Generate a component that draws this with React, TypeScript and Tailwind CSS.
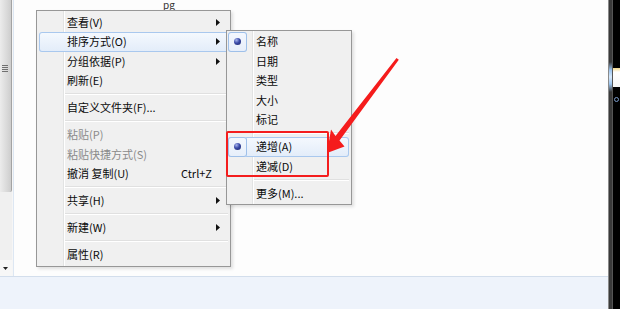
import React from "react";

type MItem = {
  label?: string;
  sep?: boolean;
  arrow?: boolean;
  disabled?: boolean;
  hl?: boolean;
  shortcut?: string;
  checked?: boolean;
};

const mainItems: MItem[] = [
  { label: "查看(V)", arrow: true },
  { label: "排序方式(O)", arrow: true, hl: true },
  { label: "分组依据(P)", arrow: true },
  { label: "刷新(E)" },
  { sep: true },
  { label: "自定义文件夹(F)..." },
  { sep: true },
  { label: "粘贴(P)", disabled: true },
  { label: "粘贴快捷方式(S)", disabled: true },
  { label: "撤消 复制(U)", shortcut: "Ctrl+Z" },
  { sep: true },
  { label: "共享(H)", arrow: true },
  { sep: true },
  { label: "新建(W)", arrow: true },
  { sep: true },
  { label: "属性(R)" },
];

const subItems: MItem[] = [
  { label: "名称", checked: true },
  { label: "日期" },
  { label: "类型" },
  { label: "大小" },
  { label: "标记" },
  { sep: true },
  { label: "递增(A)", checked: true, hl: true },
  { label: "递减(D)" },
  { sep: true },
  { label: "更多(M)..." },
];

const SubArrow = () => (
  <svg width="4" height="7" viewBox="0 0 4 7" className="block">
    <path d="M0 0L4 3.5L0 7Z" fill="#111" />
  </svg>
);

const Sep = ({ ml }: { ml: string }) => (
  <div className={`relative flex h-[7.5px] flex-col justify-center mr-[2px] ${ml}`}>
    <div className="h-px bg-[#e0e0e0]" />
    <div className="h-px bg-white" />
  </div>
);

const hlCls =
  "bg-[linear-gradient(to_bottom,#f5f9fe,#e2ecf9)] shadow-[inset_0_0_0_1px_#a9c8ee]";

function MainMenu() {
  return (
    <div className="absolute left-[36px] top-[10px] w-[195px] border border-[#979797] bg-[#f0f0f0] py-[1.5px] shadow-[2px_2px_3px_rgba(0,0,0,0.12)]">
      <div className="absolute left-[26px] top-0 bottom-0 w-px bg-[#e2e3e3]" />
      <div className="absolute left-[27px] top-0 bottom-0 w-px bg-white" />
      {mainItems.map((it, i) =>
        it.sep ? (
          <Sep key={i} ml="ml-[28px]" />
        ) : (
          <div
            key={i}
            className={`relative flex h-[19.5px] items-center ml-[2px] mr-[1px] pl-[28px] pr-[9px] rounded-[3px] ${
              it.hl ? hlCls : ""
            } ${it.disabled ? "text-[#8a8a8a]" : "text-[#0a0a0a]"}`}
          >
            <span className="flex-1 whitespace-nowrap">{it.label}</span>
            {it.shortcut && <span className="mr-[8px] whitespace-nowrap">{it.shortcut}</span>}
            {it.arrow && <SubArrow />}
          </div>
        )
      )}
    </div>
  );
}

function SubMenu() {
  return (
    <div className="absolute left-[226px] top-[30px] w-[126px] border border-[#979797] bg-[#f0f0f0] py-[1px] shadow-[2px_2px_3px_rgba(0,0,0,0.12)]">
      <div className="absolute left-[25px] top-0 bottom-0 w-px bg-[#e2e3e3]" />
      <div className="absolute left-[26px] top-0 bottom-0 w-px bg-white" />
      {subItems.map((it, i) =>
        it.sep ? (
          <Sep key={i} ml="ml-[27px]" />
        ) : (
          <div
            key={i}
            className={`relative flex h-[19.5px] items-center ml-[1px] mr-[2px] rounded-[3px] text-[#0a0a0a] ${
              it.hl ? hlCls : ""
            }`}
          >
            <div className="flex h-full w-[19px] shrink-0 items-center justify-center">
              {it.checked && (
                <div className="flex h-full w-full items-center justify-center rounded-[3px] bg-[linear-gradient(to_bottom,#f4f8fe,#e6eefa)] shadow-[inset_0_0_0_1px_#9fc0e9]">
                  <div className="h-[7px] w-[7px] rounded-full bg-[radial-gradient(circle_at_35%_30%,#a9b6ee_0%,#3a4aa8_45%,#1c2466_100%)]" />
                </div>
              )}
            </div>
            <span className="pl-[9px] whitespace-nowrap">{it.label}</span>
          </div>
        )
      )}
    </div>
  );
}

function Scrollbar() {
  return (
    <div className="flex w-[12px] shrink-0 flex-col bg-[#f0f0f0]">
      <div className="flex h-[192px] flex-col border-r border-[#a3a3a3] rounded-br-[2px] bg-[linear-gradient(to_right,#ececec,#dadada_60%,#cdcdcd)]">
        <div className="mt-[65px] ml-[2px] flex w-[6px] flex-col gap-[1px]">
          <div className="h-px bg-[#707070]" />
          <div className="h-px bg-[#707070]" />
          <div className="h-px bg-[#707070]" />
          <div className="h-px bg-[#707070]" />
        </div>
      </div>
      <div className="flex-1" />
      <div className="flex h-[16px] items-center justify-center pr-[2px] bg-[#f7f7f7]">
        <svg width="5" height="3" viewBox="0 0 5 3" className="block">
          <path d="M0 0H5L2.5 3Z" fill="#222" />
        </svg>
      </div>
    </div>
  );
}

function RightStrip() {
  return (
    <div className="flex h-full w-[12px] shrink-0">
      <div className="w-px bg-[#8a8a8a]" />
      <div className="w-[3px] bg-[linear-gradient(to_bottom,#3a3a3a_62px,#9cc4ee_70px,#d8eafc_77px,#9cc4ee_84px,#3a3a3a_92px)]" />
      <div className="w-px bg-[#555]" />
      <div className="flex flex-1 flex-col bg-black">
        <div className="mt-[68px] h-[19px] w-full bg-[linear-gradient(to_bottom,#f3d98a_0px,#ffffff_4px,#f5f5f5)]" />
        <div className="mt-[10px] ml-[1px] h-[5px] w-[5px] rounded-full border border-[#7a9ac8]" />
      </div>
    </div>
  );
}

export default function App() {
  return (
    <div className="relative flex h-[309px] w-[620px] overflow-hidden bg-black font-['Noto_Sans_CJK_SC','Noto_Sans',sans-serif] text-[11px] leading-none">
      <div className="flex flex-1 flex-col">
        <div className="flex h-[276px]">
          <Scrollbar />
          <div className="w-px bg-[#f6f6f6]" />
          <div className="w-px bg-[#dde7f3]" />
          <div className="flex-1 bg-[#fdfdfd]">
            <div className="pl-[149px] pt-[1px] text-[10px] leading-[8px] text-[#333]">pg</div>
          </div>
        </div>
        <div className="h-px bg-[#d3deec]" />
        <div className="flex-1 bg-[#eef3fb]" />
      </div>
      <RightStrip />

      <MainMenu />
      <SubMenu />

      <div className="absolute left-[226px] top-[131px] h-[46px] w-[103px] rounded-[2px] border-2 border-[#f41d1d]" />

      <svg
        className="pointer-events-none absolute left-0 top-0"
        width="620"
        height="309"
        viewBox="0 0 620 309"
      >
        <polygon
          points="396.5,58 398.8,59.8 339.5,140.5 344.5,146.5 327,153 331,129.5 335.5,136"
          fill="#f51c1c"
        />
      </svg>
    </div>
  );
}
